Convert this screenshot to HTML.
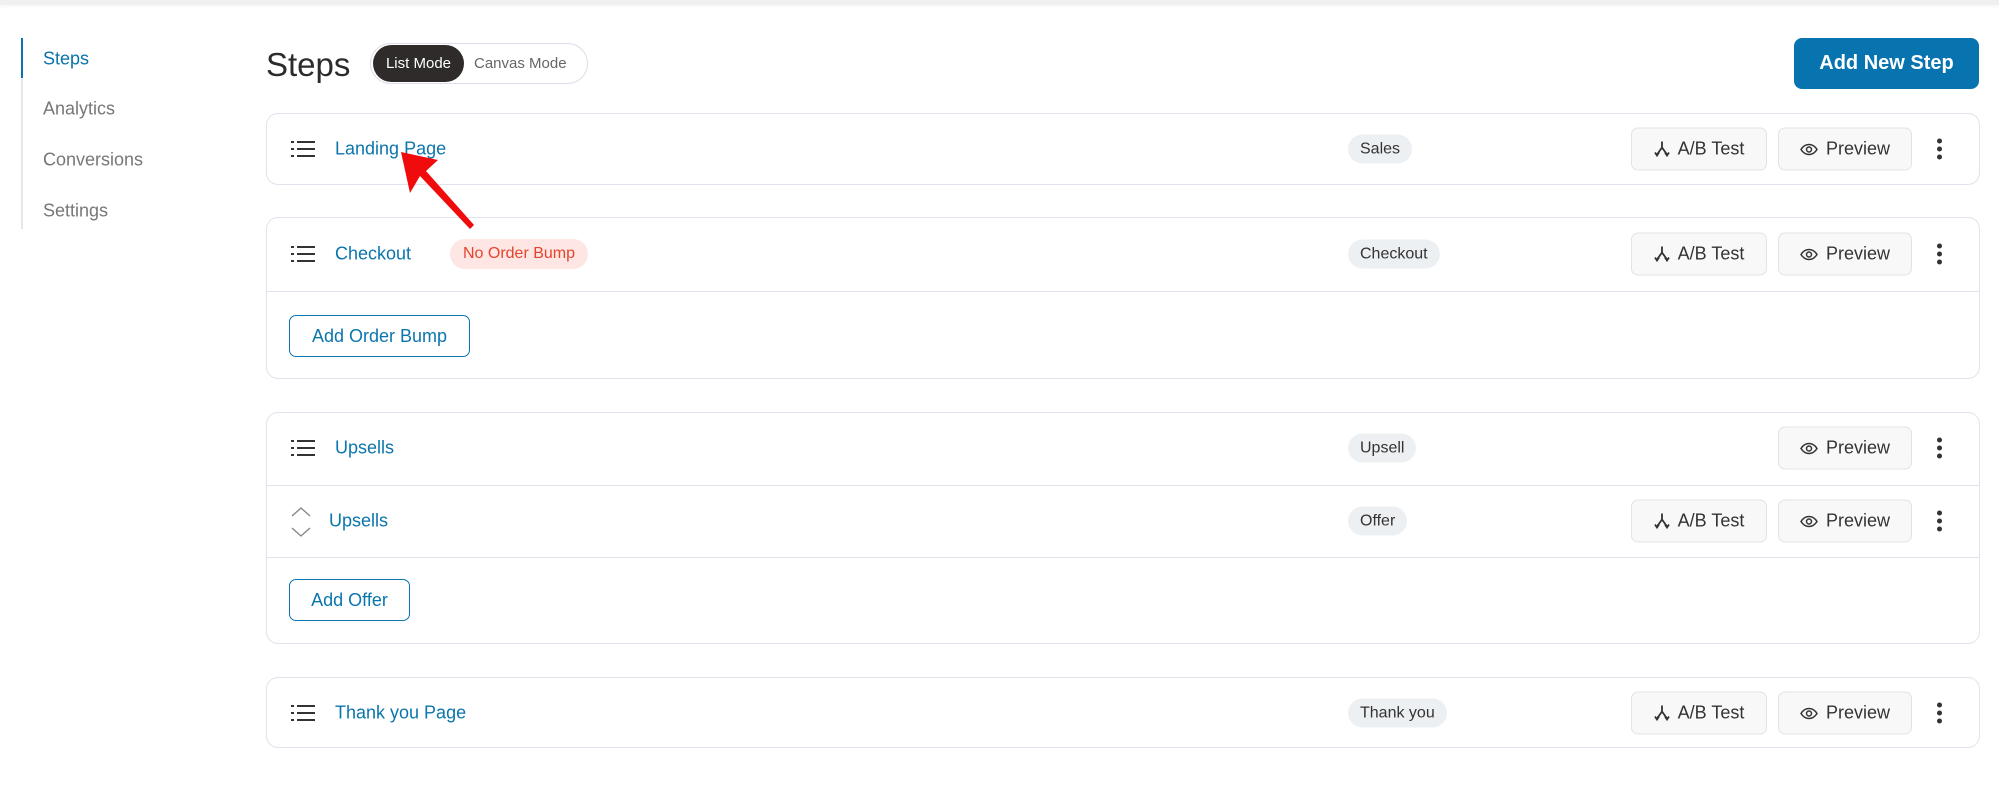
<!DOCTYPE html>
<html><head><meta charset="utf-8"><style>
*{box-sizing:border-box;margin:0;padding:0}
body{width:1999px;height:807px;background:#fff;font-family:"Liberation Sans",sans-serif;position:relative;overflow:hidden;color:#333}
.a{position:absolute}
.topbar{left:0;top:0;width:1999px;height:5px;background:#f0f0f0;box-shadow:0 1px 4px rgba(0,0,0,.06)}
.nav{left:21px;top:38px;height:191px;border-left:2px solid #e6e6ee}
.nav .act{position:absolute;left:-2px;top:0;height:40px;border-left:2px solid #0a73aa}
.ni{position:absolute;left:20px;font-size:18px;color:#777;transform:translateY(-50%);white-space:nowrap}
.card{position:absolute;left:266px;width:1714px;border:1.5px solid #e2e2ec;border-radius:12px;background:#fff}
.div{position:absolute;left:0;right:0;border-top:1.5px solid #e2e2ec}
.ham{position:absolute;left:24px;width:24px;height:18px}
.title{position:absolute;font-size:18px;color:#0b75ad;white-space:nowrap;transform:translateY(-50%)}
.badge{position:absolute;left:1081px;height:29px;border-radius:15px;background:#edf0f2;font-size:16px;color:#333;padding:0 12px;line-height:29px;transform:translateY(-50%);white-space:nowrap}
.btn{position:absolute;height:43px;border:1.5px solid #e3e3e3;border-radius:7px;background:#f8f8f8;font-size:18px;color:#333;display:flex;align-items:center;justify-content:center;gap:8px;transform:translateY(-50%)}
.ab{left:1364px;width:136px}.pv{left:1511px;width:134px}
.keb{position:absolute;left:1670px;width:6px;transform:translateY(-50%)}
.keb i{display:block;width:5px;height:5px;border-radius:50%;background:#333;margin:3px 0}
.obtn{position:absolute;left:22px;height:42px;border:1.5px solid #0b75ad;border-radius:7px;color:#0b75ad;font-size:18px;display:flex;align-items:center;justify-content:center}
</style></head><body>
<div class="a topbar"></div>
<div class="a nav"><div class="act"></div>
<div class="ni" style="top:21px;color:#0a73aa">Steps</div>
<div class="ni" style="top:71px">Analytics</div>
<div class="ni" style="top:122px">Conversions</div>
<div class="ni" style="top:173px">Settings</div>
</div>
<div class="a" style="left:266px;top:65px;transform:translateY(-50%);font-size:33px;color:#2b2b2b">Steps</div>
<div class="a" style="left:370px;top:43px;width:218px;height:41px;border:1.5px solid #dcdcea;border-radius:21px"></div>
<div class="a" style="left:373px;top:45px;width:91px;height:37px;border-radius:19px;background:#2f2b2b;color:#fff;font-size:15px;line-height:37px;text-align:center">List Mode</div>
<div class="a" style="left:474px;top:45px;height:37px;color:#666;font-size:15px;line-height:37px">Canvas Mode</div>
<div class="a" style="left:1794px;top:38px;width:185px;height:51px;border-radius:8px;background:#0774b0;color:#fff;font-size:20px;font-weight:bold;line-height:51px;text-align:center">Add New Step</div>

<svg width="0" height="0" style="position:absolute"><defs>
<symbol id="hm" viewBox="0 0 24 18"><g fill="#333"><rect x="0" y="1" width="3" height="2"/><rect x="0" y="8" width="3" height="2"/><rect x="0" y="15" width="3" height="2"/><rect x="6" y="1" width="18" height="2"/><rect x="6" y="8" width="18" height="2"/><rect x="6" y="15" width="18" height="2"/></g></symbol>
<symbol id="abi" viewBox="0 0 16 18"><g fill="none" stroke="#333" stroke-width="1.8"><path d="M8 1v6M8 7L3 14M8 7l5 7M1 12l2 3 2-3M11 12l2 3 2-3"/></g></symbol>
<symbol id="eye" viewBox="0 0 18 12"><g fill="none" stroke="#333" stroke-width="1.5"><path d="M1 6C3.5 2 6 1 9 1s5.5 1 8 5c-2.5 4-5 5-8 5s-5.5-1-8-5z"/><circle cx="9" cy="6" r="2.5"/></g></symbol>
</defs></svg>

<div class="card" style="top:113px;height:72px">
 <svg class="ham" style="top:26px"><use href="#hm"/></svg>
 <div class="title" style="left:68px;top:35px">Landing Page</div>
 <div class="badge" style="top:35px">Sales</div>
 <div class="btn ab" style="top:35px"><svg width="16" height="18"><use href="#abi"/></svg>A/B Test</div>
 <div class="btn pv" style="top:35px"><svg width="18" height="12"><use href="#eye"/></svg>Preview</div>
 <div class="keb" style="top:35px"><i></i><i></i><i></i></div>
</div>
<div class="card" style="top:217px;height:162px">
 <svg class="ham" style="top:27px"><use href="#hm"/></svg>
 <div class="title" style="left:68px;top:36px">Checkout</div>
 <div class="a" style="left:183px;top:21px;height:30px;width:138px;border-radius:15px;background:#fde6e4;color:#e5452e;font-size:16px;line-height:30px;text-align:center">No Order Bump</div>
 <div class="badge" style="top:36px">Checkout</div>
 <div class="btn ab" style="top:36px"><svg width="16" height="18"><use href="#abi"/></svg>A/B Test</div>
 <div class="btn pv" style="top:36px"><svg width="18" height="12"><use href="#eye"/></svg>Preview</div>
 <div class="keb" style="top:36px"><i></i><i></i><i></i></div>
 <div class="div" style="top:73px"></div>
 <div class="obtn" style="top:97px;width:181px">Add Order Bump</div>
</div>
<div class="card" style="top:412px;height:232px">
 <svg class="ham" style="top:26px"><use href="#hm"/></svg>
 <div class="title" style="left:68px;top:35px">Upsells</div>
 <div class="badge" style="top:35px">Upsell</div>
 <div class="btn pv" style="top:35px"><svg width="18" height="12"><use href="#eye"/></svg>Preview</div>
 <div class="keb" style="top:35px"><i></i><i></i><i></i></div>
 <div class="div" style="top:72px"></div>
 <svg class="a" style="left:24px;top:94px" width="20" height="30"><g fill="none" stroke="#888" stroke-width="1.4"><path d="M1 9l9-8 9 8M1 21l9 8 9-8"/></g></svg>
 <div class="title" style="left:62px;top:108px">Upsells</div>
 <div class="badge" style="top:108px">Offer</div>
 <div class="btn ab" style="top:108px"><svg width="16" height="18"><use href="#abi"/></svg>A/B Test</div>
 <div class="btn pv" style="top:108px"><svg width="18" height="12"><use href="#eye"/></svg>Preview</div>
 <div class="keb" style="top:108px"><i></i><i></i><i></i></div>
 <div class="div" style="top:144px"></div>
 <div class="obtn" style="top:166px;width:121px">Add Offer</div>
</div>
<div class="card" style="top:677px;height:71px">
 <svg class="ham" style="top:26px"><use href="#hm"/></svg>
 <div class="title" style="left:68px;top:35px">Thank you Page</div>
 <div class="badge" style="top:35px">Thank you</div>
 <div class="btn ab" style="top:35px"><svg width="16" height="18"><use href="#abi"/></svg>A/B Test</div>
 <div class="btn pv" style="top:35px"><svg width="18" height="12"><use href="#eye"/></svg>Preview</div>
 <div class="keb" style="top:35px"><i></i><i></i><i></i></div>
</div>
<svg class="a" style="left:0;top:0" width="600" height="300"><polygon points="401,152 438,160 426,171 474,225 470,229 420,176 410,193" fill="#f00c0c"/></svg>
</body></html>
